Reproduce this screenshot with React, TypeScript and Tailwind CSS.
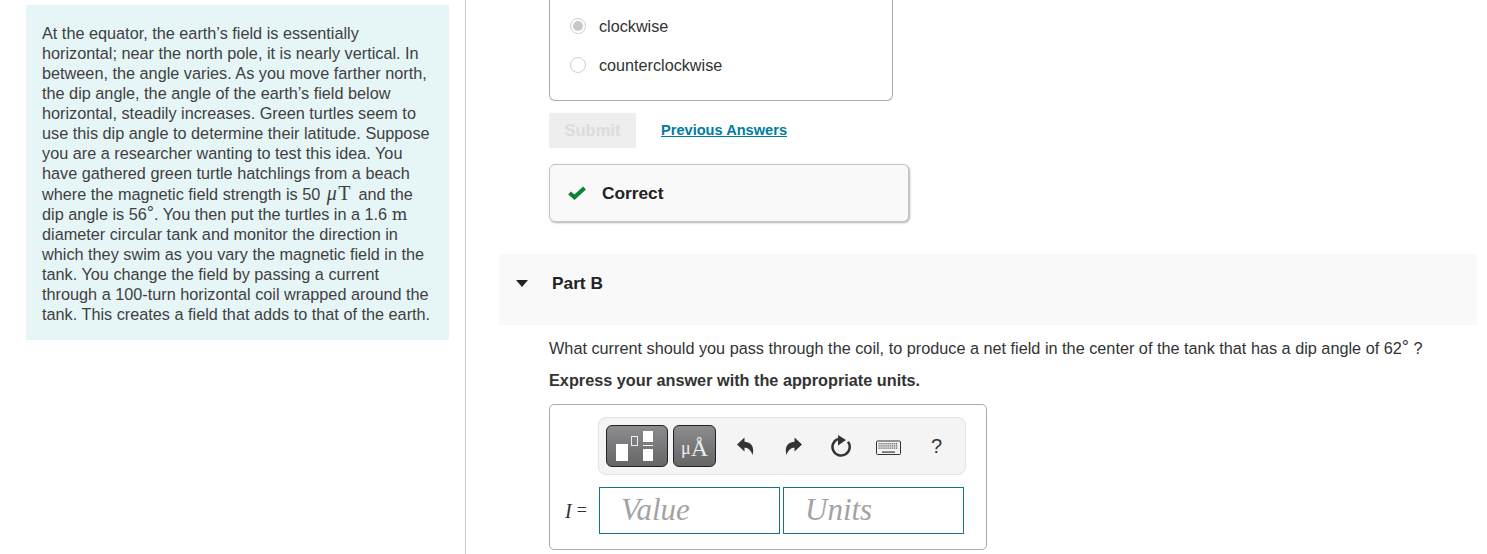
import React from "react";

const serif = "[font-family:'Liberation_Serif',serif]";

function Radio({ checked }: { checked?: boolean }) {
  return (
    <span className="mb-[2px] flex h-[16px] w-[16px] shrink-0 items-center justify-center rounded-full border border-[#cfcfcf] bg-white">
      {checked && <span className="h-[10px] w-[10px] rounded-full bg-[#c9c9c9]" />}
    </span>
  );
}

function Keyboard() {
  const keys: React.ReactNode[] = [];
  for (let r = 0; r < 3; r++) {
    for (let c = 0; c < 10; c++) {
      keys.push(<rect key={`${r}-${c}`} x={2.5 + c * 1.95} y={3 + r * 2.2} width="1.2" height="1.4" fill="#666" />);
    }
  }
  return (
    <svg width="25" height="15" viewBox="0 0 25 15">
      <rect x="0.5" y="1" width="24" height="13.5" rx="1" fill="#f4f4f4" stroke="#333" />
      {keys}
      <rect x="6" y="11.4" width="13" height="1.4" fill="#555" />
    </svg>
  );
}

function Deg() {
  return <span className="relative top-[-1px] text-[18px] leading-[0]">°</span>;
}

const arrow = "M0 7.5 L7.5 0.5 V4.8 C13.5 5 18 9.5 15.5 18 C14 13.5 11.5 10.8 7.5 10.8 V14.5 Z";

export default function App() {
  return (
    <div className="flex h-[554px] w-[1487px] overflow-hidden bg-white font-['Liberation_Sans',Arial,sans-serif] text-[16px] text-[#333]">
      <div className="h-full w-[466px] shrink-0 border-r border-[#c8c8c8] pl-[26px] pt-[5px]">
        <div className="h-[335px] w-[423px] whitespace-nowrap bg-[#e6f6f7] pl-[16px] pt-[18px] text-[16.25px] leading-[20.07px] text-[#3f3f3f]">
          At the equator, the earth’s field is essentially<br />
          horizontal; near the north pole, it is nearly vertical. In<br />
          between, the angle varies. As you move farther north,<br />
          the dip angle, the angle of the earth’s field below<br />
          horizontal, steadily increases. Green turtles seem to<br />
          use this dip angle to determine their latitude. Suppose<br />
          you are a researcher wanting to test this idea. You<br />
          have gathered green turtle hatchlings from a beach<br />
          where the magnetic field strength is 50{" "}
          <span className={`${serif} mx-[2px] text-[20px] leading-[0] tracking-[1.5px]`}><i>μ</i>T</span> and the<br />
          dip angle is 56<Deg />. You then put the turtles in a 1.6{" "}
          <span className="font-['DejaVu_Serif',serif] text-[16.5px] leading-[0]">m</span><br />
          diameter circular tank and monitor the direction in<br />
          which they swim as you vary the magnetic field in the<br />
          tank. You change the field by passing a current<br />
          through a 100-turn horizontal coil wrapped around the<br />
          tank. This creates a field that adds to that of the earth.
        </div>
      </div>

      <div className="min-w-0 flex-1 pl-[33px]">
        <div className="pl-[50px]">
          <div className="flex h-[101px] w-[344px] flex-col rounded-b-[6px] border-x border-b border-[#aaa] pl-[20px] pt-[7px] text-[16.2px]">
            <div className="flex h-[39px] items-center gap-[13px]"><Radio checked />clockwise</div>
            <div className="flex h-[39px] items-center gap-[13px]"><Radio />counterclockwise</div>
          </div>
          <div className="mt-[12px] flex h-[35px] items-center">
            <div className="flex h-[35px] w-[87px] items-center justify-center rounded-[2px] bg-[#eeeeee] text-[16.5px] font-bold text-[#dcdcdc]">Submit</div>
            <a className="ml-[25px] text-[14.6px] font-bold text-[#007c9e] underline">Previous Answers</a>
          </div>
          <div className="mt-[16px] flex h-[58px] w-[360px] items-center rounded-[6px] border border-[#c4c4c4] bg-[#f9f9f9] pl-[18px] shadow-[1px_1px_2px_rgba(0,0,0,0.3)]">
            <svg width="18" height="14" viewBox="0 0 18 14"><path d="M1.5 7 L6.5 11.2 L16.5 2" fill="none" stroke="#13803a" strokeWidth="4.2" /></svg>
            <span className="ml-[16px] pt-[2px] text-[17.3px] font-bold text-[#222]">Correct</span>
          </div>
        </div>

        <div className="mt-[32px] flex h-[71px] w-[978px] items-center bg-[#f9f9f9] pb-[13px] pl-[17px]">
          <span className="h-0 w-0 border-x-[6.5px] border-t-[7px] border-x-transparent border-t-[#222]" />
          <span className="ml-[24px] pt-[2px] text-[17.3px] font-bold text-[#222]">Part B</span>
        </div>

        <div className="pl-[50px]">
          <p className="mt-[13px] flex h-[20px] items-center whitespace-pre text-[16.26px]">
            What current should you pass through the coil, to produce a net field in the center of the tank that has a dip angle of 62<Deg /> ?
          </p>
          <p className="mt-[12px] flex h-[20px] items-center text-[16.25px] font-bold">Express your answer with the appropriate units.</p>
          <div className="mt-[14px] h-[146px] w-[438px] rounded-[5px] border border-[#aaa] pl-[48px] pt-[12px]">
            <div className="flex h-[58px] w-[368px] items-center rounded-[8px] border border-[#e2e2e2] bg-[#f4f4f4] pl-[7px]">
              <div className="flex h-[42px] w-[62px] items-center justify-center gap-[3px] rounded-[6px] border border-[#222] bg-gradient-to-b from-[#8d8b8f] to-[#666] pr-[5px]">
                <div className="mt-[13px] h-[17px] w-[12px] bg-white" />
                <div className="mb-[11px] h-[10px] w-[7px] border border-[#eee]" />
                <div className="ml-[2px] flex flex-col gap-[3px]">
                  <div className="h-[11px] w-[10px] bg-white" />
                  <div className="h-[1px] w-[10px] bg-white" />
                  <div className="h-[12px] w-[10px] bg-white" />
                </div>
              </div>
              <div className={`ml-[5px] flex h-[42px] w-[43px] items-center justify-center rounded-[6px] border border-[#222] bg-gradient-to-b from-[#8d8b8f] to-[#666] pt-[3px] text-[24px] leading-none text-[#eee] ${serif}`}>
                <span className="text-[18px]">μ</span>Å
              </div>
              <svg className="ml-[21px]" width="17" height="18" viewBox="0 0 17 18"><path d={arrow} fill="#333" /></svg>
              <svg className="ml-[31px]" width="17" height="18" viewBox="0 0 17 18"><path d={arrow} fill="#333" transform="translate(17 0) scale(-1 1)" /></svg>
              <svg className="ml-[29px]" width="20" height="22" viewBox="0 0 20 22">
                <path d="M17 6.8 A8.6 8.6 0 1 1 7 3.9" fill="none" stroke="#333" strokeWidth="2.5" />
                <path d="M7 0 L7 10.5 L15 5 Z" fill="#333" />
              </svg>
              <span className="ml-[25px] mt-[3px] flex"><Keyboard /></span>
              <span className="ml-[30px] text-[20px] text-[#333]">?</span>
            </div>
            <div className="ml-[-35px] mt-[12px] flex items-center">
              <span className={`flex w-[36px] items-center gap-[5px] pl-[2px] text-[20px] ${serif}`}><i>I</i><span className="text-[18px]">=</span></span>
              <div className={`flex h-[47px] w-[181px] items-center border border-[#17748f] pb-[1px] pl-[21px] text-[31px] italic text-[#a3a3a3] ${serif}`}>Value</div>
              <div className={`ml-[3px] flex h-[47px] w-[181px] items-center border border-[#17748f] pb-[1px] pl-[21px] text-[31px] italic text-[#a3a3a3] ${serif}`}>Units</div>
            </div>
          </div>
        </div>
      </div>
    </div>
  );
}
